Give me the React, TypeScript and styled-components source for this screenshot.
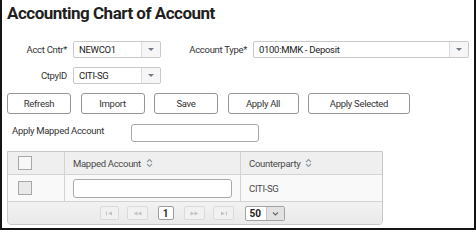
import React from 'react';
import styled, { createGlobalStyle } from 'styled-components';

const GlobalStyle = createGlobalStyle`
	html, body {
		margin: 0;
		padding: 0;
		background: #ffffff;
	}
	body {
		font-family: Roboto, 'Liberation Sans', Arial, sans-serif;
		color: #333333;
	}
`;

const smallText = `
	font-size: 9.5px;
	letter-spacing: -0.3px;
`;

const Frame = styled.div`
	box-sizing: border-box;
	width: 476px;
	height: 230px;
	border: 2px solid #141414;
	border-top: none;
	padding: 0 5px;
	background: #ffffff;
	overflow: hidden;
`;

const Title = styled.h1`
	margin: 0;
	padding-top: 3px;
	font-size: 17px;
	line-height: 21px;
	font-weight: 700;
	color: #1f1f1f;
	letter-spacing: -0.5px;
`;

const Form = styled.div`
	display: flex;
	flex-direction: column;
	gap: 9px;
	margin-top: 17px;
`;

const FieldRow = styled.div`
	display: flex;
	align-items: center;
	height: 17px;
`;

const Label = styled.label<{ $width: number; $gapLeft?: number }>`
	width: ${({ $width }) => $width}px;
	margin-left: ${({ $gapLeft }) => $gapLeft ?? 0}px;
	margin-right: 6px;
	text-align: right;
	${smallText}
	color: #333333;
	white-space: nowrap;
`;

const SelectBox = styled.div<{ $width: number }>`
	box-sizing: border-box;
	display: flex;
	width: ${({ $width }) => $width}px;
	height: 17px;
	border: 1px solid #c9c9c9;
	border-radius: 2px;
	background: #ffffff;
`;

const SelectValue = styled.span`
	flex: 1;
	padding-left: 5px;
	${smallText}
	line-height: 15px;
	color: #222222;
	white-space: nowrap;
	overflow: hidden;
`;

const SelectArrow = styled.span`
	display: flex;
	align-items: center;
	justify-content: center;
	width: 18px;
	border-left: 1px solid #dcdcdc;
	background: #f6f6f6;

	&::after {
		content: '';
		border-left: 3.5px solid transparent;
		border-right: 3.5px solid transparent;
		border-top: 3px solid #6f7a86;
	}
`;

const ButtonRow = styled.div`
	display: flex;
	gap: 9.5px;
	margin-top: 9px;
`;

const Button = styled.button<{ $width: number }>`
	box-sizing: border-box;
	width: ${({ $width }) => $width}px;
	height: 21px;
	padding: 0;
	border: 1px solid #969696;
	border-radius: 3px;
	background: #ffffff;
	font-family: inherit;
	${smallText}
	color: #333333;
`;

const MappedRow = styled.div`
	display: flex;
	align-items: flex-start;
	margin-top: 10px;
`;

const MappedLabel = styled.span`
	width: 119px;
	padding-left: 5px;
	padding-top: 1px;
	${smallText}
	color: #333333;
`;

const TextInput = styled.input<{ $width: number; $height: number }>`
	box-sizing: border-box;
	width: ${({ $width }) => $width}px;
	height: ${({ $height }) => $height}px;
	border: 1px solid #a9a9a9;
	border-radius: 3px;
	background: #ffffff;
	outline: none;
`;

const Grid = styled.div`
	box-sizing: border-box;
	width: 376px;
	margin-top: 9px;
	border: 1px solid #c8c8c8;
	border-radius: 0 0 4px 4px;
	overflow: hidden;
`;

const GridRow = styled.div<{ $header?: boolean }>`
	display: grid;
	grid-template-columns: 56px 176px 1fr;
	height: ${({ $header }) => ($header ? 22 : 26)}px;
	background: ${({ $header }) => ($header ? '#efefef' : '#f9f9f9')};
	border-bottom: 1px solid #d3d3d3;
`;

const Cell = styled.div<{ $first?: boolean }>`
	display: flex;
	align-items: center;
	padding-left: ${({ $first }) => ($first ? 10 : 8)}px;
	border-left: ${({ $first }) => ($first ? 'none' : '1px solid #d3d3d3')};
	${smallText}
	color: #4a4a4a;
	gap: 5px;
`;

const Checkbox = styled.span<{ $filled?: boolean }>`
	box-sizing: border-box;
	width: 14px;
	height: 14px;
	border: 1px solid #a8a8a8;
	background: ${({ $filled }) => ($filled ? '#e9e9e9' : '#f7f7f7')};
`;

const Pager = styled.div`
	display: flex;
	align-items: center;
	justify-content: center;
	gap: 8px;
	height: 22px;
	padding-right: 6px;
	background: linear-gradient(#f2f2f2, #e9e9e9);
`;

const PageButton = styled.span<{ $width?: number }>`
	box-sizing: border-box;
	display: flex;
	align-items: center;
	justify-content: center;
	width: ${({ $width }) => $width ?? 19}px;
	height: 14px;
	border: 1px solid #dadada;
	border-radius: 2px;
	background: #f1f1f1;
`;

const PageNumber = styled.span`
	box-sizing: border-box;
	display: flex;
	align-items: center;
	justify-content: center;
	width: 16px;
	height: 14px;
	margin: 0 2px;
	border: 1px solid #9d9d9d;
	border-radius: 2px;
	background: #ffffff;
	font-size: 10px;
	font-weight: 700;
	color: #333333;
`;

const PageSize = styled.span`
	box-sizing: border-box;
	display: flex;
	width: 40px;
	height: 15px;
	margin-left: 3px;
	border: 1px solid #a3a3a3;
	border-radius: 2px;
	background: #ffffff;
`;

const PageSizeValue = styled.span`
	flex: 1;
	padding-left: 4px;
	font-size: 10px;
	font-weight: 700;
	line-height: 13px;
	color: #222222;
`;

const PageSizeArrow = styled.span`
	display: flex;
	align-items: center;
	justify-content: center;
	width: 17px;
	border-left: 1px solid #c5c5c5;
	background: #e2e2e2;
`;

const SortIcon = () => (
	<svg width="7" height="10" viewBox="0 0 7 10" fill="none" stroke="#8c9aa8" strokeWidth="1.1">
		<path d="M1 4 L3.5 1.5 L6 4" />
		<path d="M1 6 L3.5 8.5 L6 6" />
	</svg>
);

const PagerGlyph = ({ kind }: { kind: 'first' | 'prev' | 'next' | 'last' }) => {
	const color = '#c3c3c3';
	return (
		<svg width="9" height="5" viewBox="0 0 9 5" fill={color}>
			{kind === 'first' && (
				<>
					<rect x="1" y="0.5" width="1" height="4" />
					<path d="M7 0.5 L3 2.5 L7 4.5 Z" />
				</>
			)}
			{kind === 'prev' && (
				<>
					<path d="M4.5 0.5 L0.5 2.5 L4.5 4.5 Z" />
					<path d="M8.5 0.5 L4.5 2.5 L8.5 4.5 Z" />
				</>
			)}
			{kind === 'next' && (
				<>
					<path d="M0.5 0.5 L4.5 2.5 L0.5 4.5 Z" />
					<path d="M4.5 0.5 L8.5 2.5 L4.5 4.5 Z" />
				</>
			)}
			{kind === 'last' && (
				<>
					<path d="M2 0.5 L6 2.5 L2 4.5 Z" />
					<rect x="7" y="0.5" width="1" height="4" />
				</>
			)}
		</svg>
	);
};

const Select = ({ value, width }: { value: string; width: number }) => (
	<SelectBox $width={width}>
		<SelectValue>{value}</SelectValue>
		<SelectArrow />
	</SelectBox>
);

const App = () => {
	return (
		<>
			<GlobalStyle />
			<Frame>
				<Title>Accounting Chart of Account</Title>
				<Form>
					<FieldRow>
						<Label $width={60}>Acct Cntr*</Label>
						<Select value="NEWCO1" width={88} />
						<Label $width={58} $gapLeft={28}>
							Account Type*
						</Label>
						<Select value="0100:MMK - Deposit" width={216} />
					</FieldRow>
					<FieldRow>
						<Label $width={60}>CtpyID</Label>
						<Select value="CITI-SG" width={88} />
					</FieldRow>
				</Form>
				<ButtonRow>
					<Button $width={64}>Refresh</Button>
					<Button $width={64}>Import</Button>
					<Button $width={64}>Save</Button>
					<Button $width={71}>Apply All</Button>
					<Button $width={102}>Apply Selected</Button>
				</ButtonRow>
				<MappedRow>
					<MappedLabel>Apply Mapped Account</MappedLabel>
					<TextInput $width={128} $height={18} />
				</MappedRow>
				<Grid>
					<GridRow $header>
						<Cell $first>
							<Checkbox />
						</Cell>
						<Cell>
							Mapped Account <SortIcon />
						</Cell>
						<Cell>
							Counterparty <SortIcon />
						</Cell>
					</GridRow>
					<GridRow>
						<Cell $first>
							<Checkbox $filled />
						</Cell>
						<Cell>
							<TextInput $width={159} $height={19} />
						</Cell>
						<Cell>CITI-SG</Cell>
					</GridRow>
					<Pager>
						<PageButton>
							<PagerGlyph kind="first" />
						</PageButton>
						<PageButton $width={21}>
							<PagerGlyph kind="prev" />
						</PageButton>
						<PageNumber>1</PageNumber>
						<PageButton $width={21}>
							<PagerGlyph kind="next" />
						</PageButton>
						<PageButton $width={21}>
							<PagerGlyph kind="last" />
						</PageButton>
						<PageSize>
							<PageSizeValue>50</PageSizeValue>
							<PageSizeArrow>
								<svg width="7" height="5" viewBox="0 0 7 5" fill="none" stroke="#666" strokeWidth="1.1">
									<path d="M1 1.5 L3.5 4 L6 1.5" />
								</svg>
							</PageSizeArrow>
						</PageSize>
					</Pager>
				</Grid>
			</Frame>
		</>
	);
};

export default App;
